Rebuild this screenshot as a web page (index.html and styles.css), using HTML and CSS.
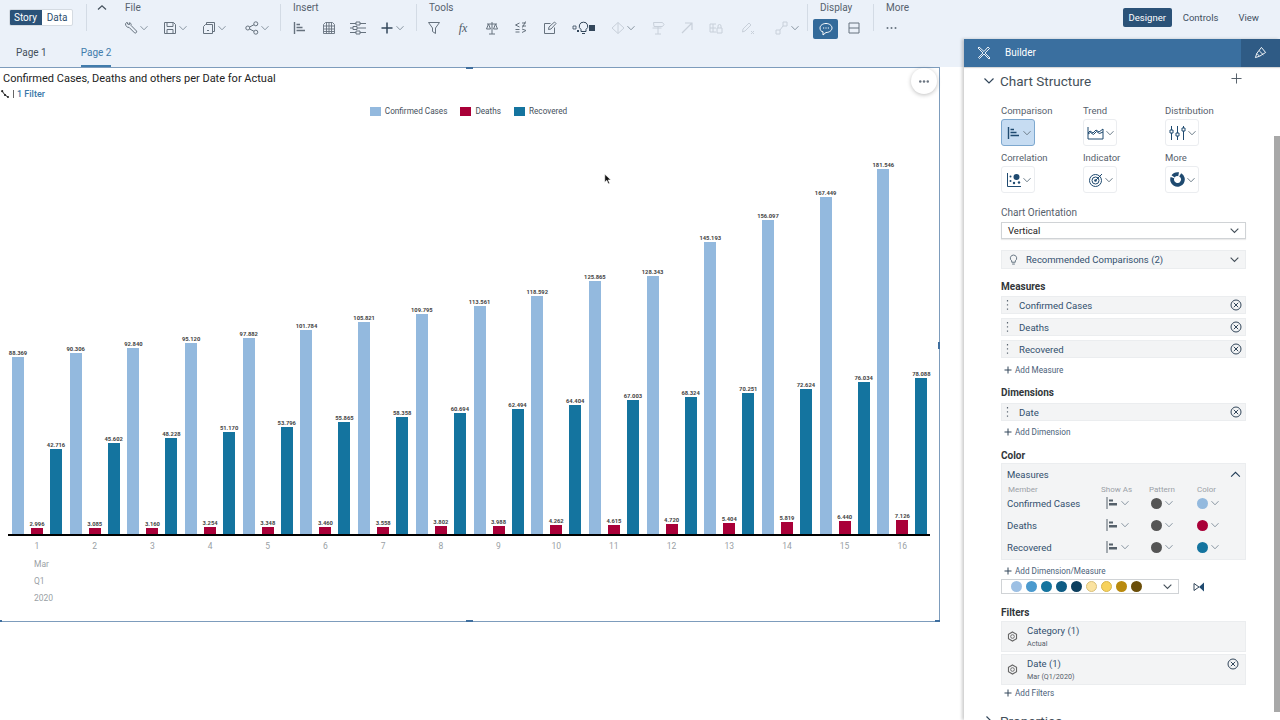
FILE: index.html
```html
<!DOCTYPE html>
<html lang="en">
<head>
<meta charset="utf-8">
<title>Story Designer</title>
<link rel="stylesheet" href="styles.css">
</head>
<body>
<svg class="defs" width="0" height="0">
  <symbol id="chev" viewBox="0 0 10 10"><path d="M1.5 3.2 5 6.8l3.5-3.6" fill="none" stroke="currentColor" stroke-width="1"/></symbol>
  <symbol id="xc" viewBox="0 0 12 12"><circle cx="6" cy="6" r="5" fill="none" stroke="currentColor"/><path d="M3.8 3.8l4.4 4.4M8.2 3.8 3.8 8.2" stroke="currentColor" fill="none"/></symbol>
  <symbol id="bars" viewBox="0 0 14 14"><path d="M1.5 1v12M3.5 3.5h3.5M3.5 6.5h6M3.5 9.5h8.5" stroke="currentColor" fill="none" stroke-width="1.4"/></symbol>
  <symbol id="grip" viewBox="0 0 3 12"><path d="M1.5 1v1.4M1.5 5.2v1.4M1.5 9.4v1.4" stroke="currentColor" stroke-width="1.2"/></symbol>
  <symbol id="hex" viewBox="0 0 12 12"><path d="M6 1 10.4 3.5v5L6 11 1.6 8.5v-5z" fill="none" stroke="currentColor" stroke-width="1.2"/><circle cx="6" cy="6" r="2" fill="none" stroke="currentColor"/></symbol>
  <symbol id="showas" viewBox="0 0 12 12"><path d="M1 0v12" stroke="currentColor"/><path d="M3 2.5h4v2H3zM3 6h8v2.500H3z" fill="currentColor"/></symbol>
</svg>

<header class="toolbar">
  <div class="switch"><span class="switch-on">Story</span><span class="switch-off">Data</span></div>
  <span class="sep sep-first"></span>
  <svg class="collapse" viewBox="0 0 10 10" width="10" height="10"><path d="M1 6.500 5 2.800l4 3.700" fill="none" stroke="currentColor" stroke-width="1.2"/></svg>

  <section class="group group-file">
    <h4>File</h4>
    <div class="tools">
      <span class="tool"><svg class="ico" viewBox="0 0 14 14"><path d="M1.500 2.800 3 1.200l.8 2 1.700.3L5.200 1.800C6.500 1.600 7.600 3 7 4.400l5.500 5.600c.8 1-.9 2.700-1.900 1.900L5 6.300C3.400 6.900 1.500 5 1.500 2.800z" fill="none" stroke="currentColor"/></svg><svg class="chev"><use href="#chev"/></svg></span>
      <span class="tool"><svg class="ico" viewBox="0 0 14 14"><path d="M1.500 1.500h9l2 2v9h-11zM4 1.500v4h6v-4M4 12.500v-4h6v4" fill="none" stroke="currentColor"/></svg><svg class="chev"><use href="#chev"/></svg></span>
      <span class="tool"><svg class="ico" viewBox="0 0 14 14"><path d="M4.500 3.500v-2h8v9h-2M1.500 5.500l2-2h7v9h-9z" fill="none" stroke="currentColor"/><path d="M5 9.500h2" stroke="currentColor"/></svg><svg class="chev"><use href="#chev"/></svg></span>
      <span class="tool tool-share"><svg class="ico" viewBox="0 0 14 14"><circle cx="2.800" cy="7" r="2" fill="none" stroke="currentColor"/><circle cx="10.800" cy="2.800" r="2" fill="none" stroke="currentColor"/><circle cx="10.800" cy="11.200" r="2" fill="none" stroke="currentColor"/><path d="M4.600 6 9 3.700M4.600 8 9 10.300" stroke="currentColor"/></svg><svg class="chev"><use href="#chev"/></svg></span>
    </div>
  </section>
  <span class="sep"></span>

  <section class="group group-insert">
    <h4>Insert</h4>
    <div class="tools">
      <span class="tool"><svg class="ico"><use href="#bars"/></svg></span>
      <span class="tool"><svg class="ico" viewBox="0 0 14 14"><path d="M3.500 1.500h7l2 2v9h-11v-9zM1.500 5h11M1.500 8h11M1.500 10.500h11M4.500 1.500v11M7 1.500v11M9.500 1.500v11" fill="none" stroke="currentColor" stroke-width=".9"/></svg></span>
      <span class="tool tool-wider"><svg class="ico ico-wide" viewBox="0 0 18 14"><path d="M1 2.500h6M11 2.500h6M1 7h3M8 7h9M1 11.500h6M11 11.500h6" stroke="currentColor" fill="none"/><path d="M7 1h4v3H7zM4 5.500h4v3H4zM7 10h4v3H7z" stroke="currentColor" fill="none"/></svg></span>
      <span class="tool"><svg class="ico" viewBox="0 0 14 14"><path d="M7 1.500v11M1.500 7h11" stroke="#33475b" stroke-width="1.500"/></svg><svg class="chev"><use href="#chev"/></svg></span>
    </div>
  </section>
  <span class="sep"></span>

  <section class="group group-tools">
    <h4>Tools</h4>
    <div class="tools">
      <span class="tool"><svg class="ico" viewBox="0 0 14 14"><path d="M1.500 1.500h11L8.500 7v5.500l-3-2V7z" fill="none" stroke="currentColor"/></svg></span>
      <span class="tool"><em class="fx">fx</em></span>
      <span class="tool"><svg class="ico" viewBox="0 0 14 14"><path d="M7 1v12M4 13h6M2 3h10M3.500 3 1.500 8h4zM10.500 3l-2 5h4z" fill="none" stroke="currentColor"/></svg></span>
      <span class="tool"><svg class="ico" viewBox="0 0 14 14"><path d="M5.500 2 1.500 4l4 2M1.500 8.500h4M1.500 11h4M8 2l4 0M8 5h4M11.500 .5 8.500 6.500M8 8l4 1.500L8 11.500" fill="none" stroke="currentColor"/></svg></span>
      <span class="tool"><svg class="ico" viewBox="0 0 14 14"><path d="M7.500 2.500h-6v10h10v-6M5.500 8.500l.5-2.500 5.500-5 1.500 1.500-5 5.500z" fill="none" stroke="currentColor"/></svg></span>
      <span class="tool tool-bulb"><svg class="ico-bulb" viewBox="0 0 24 14"><path d="M11.500 1.200a4 4 0 0 0-2.500 7.300v2h5v-2a4 4 0 0 0-2.500-7.300zM10 12.500h3" fill="none" stroke="currentColor"/><path d="M1 5h3v3H1z" fill="none" stroke="currentColor" stroke-width=".8"/><path d="M5 9h2v2H5z" fill="currentColor"/><path d="M17 4h6v6h-6z" fill="currentColor"/></svg></span>
      <span class="tool off"><svg class="ico" viewBox="0 0 14 14"><path d="M7 1.500 13 7l-6 5.500L1 7zM7 1.500v11" fill="none" stroke="currentColor"/></svg><svg class="chev"><use href="#chev"/></svg></span>
      <span class="tool off"><svg class="ico" viewBox="0 0 14 14"><path d="M7 5.500V13M4 13h6M2.500 1.500h9l1.500 2-1.500 2H3zM1.500 7h9" fill="none" stroke="currentColor"/></svg></span>
      <span class="tool off"><svg class="ico" viewBox="0 0 14 14"><path d="M2 12 12 2M5 2h7v7" fill="none" stroke="currentColor" stroke-width="1.200"/></svg></span>
      <span class="tool off"><svg class="ico" viewBox="0 0 14 14"><path d="M1 3h6M1 3v8h6M4 3v8M1 7h6M8 7h5v5H8zM9 7V5a1.500 1.500 0 0 1 3 0v2" fill="none" stroke="currentColor"/></svg></span>
      <span class="tool off tool-pen"><svg class="ico" viewBox="0 0 14 14"><path d="M1.500 11l.5-3L8 2l2 2-6 6zM10 10l3 3M13 10l-3 3" fill="none" stroke="currentColor"/></svg></span>
      <span class="tool off tool-nodes"><svg class="ico" viewBox="0 0 14 14"><path d="M1 9h4v4H1zM8 1h4v4H8zM5 9l3-4" fill="none" stroke="currentColor"/></svg><svg class="chev"><use href="#chev"/></svg></span>
    </div>
  </section>
  <span class="sep sep-tight"></span>

  <section class="group group-display">
    <h4>Display</h4>
    <div class="tools">
      <span class="tool tool-active"><svg class="ico" viewBox="0 0 14 14"><path d="M7 1.500c3.300 0 6 2 6 4.500s-2.700 4.500-6 4.500l-3 2.500v-3.200C2.300 9.800 1 8 1 6c0-2.500 2.700-4.500 6-4.500z" fill="none" stroke="currentColor"/><path d="M4 6h1.200M6.400 6h1.200M8.800 6H10" stroke="currentColor"/></svg></span>
      <span class="tool"><svg class="ico" viewBox="0 0 14 14"><path d="M2 2h10v10H2zM2 7h10" fill="none" stroke="currentColor"/></svg></span>
    </div>
  </section>
  <span class="sep sep-tight"></span>

  <section class="group group-more">
    <h4>More</h4>
    <div class="tools"><span class="tool"><svg class="ico" viewBox="0 0 14 14"><circle cx="2.500" cy="7" r="1" fill="currentColor"/><circle cx="6.500" cy="7" r="1" fill="currentColor"/><circle cx="10.500" cy="7" r="1" fill="currentColor"/></svg></span></div>
  </section>

  <nav class="modes"><span class="mode mode-on">Designer</span><span class="mode">Controls</span><span class="mode">View</span></nav>
</header>

<div class="workspace">
  <main class="story">
    <div class="tabs"><span class="tab">Page 1</span><span class="tab tab-on">Page 2</span></div>
    <div class="widget">
      <h1 class="chart-title">Confirmed Cases, Deaths and others per Date for Actual</h1>
      <div class="filterline">
        <svg viewBox="0 0 8 8" width="8" height="8"><path d="M1 1l3 4 3 2" fill="none" stroke="#222" stroke-width="1"/><circle cx="1.200" cy="1.200" r="1.100" fill="#222"/><circle cx="4" cy="5" r="1.100" fill="#222"/><circle cx="7" cy="7" r="1" fill="#222"/></svg>
        <span class="bar-sep"></span><span class="filter-link">1 Filter</span>
      </div>
      <ul class="legend">
        <li><i class="swatch cc"></i>Confirmed Cases</li>
        <li><i class="swatch de"></i>Deaths</li>
        <li><i class="swatch re"></i>Recovered</li>
      </ul>
      <div class="plot">
        <div class="day"><div class="col"><b>88.369</b><i class="cc" style="height:177px"></i></div><div class="col"><b>2.996</b><i class="de" style="height:6px"></i></div><div class="col"><b>42.716</b><i class="re" style="height:85px"></i></div></div>
        <div class="day"><div class="col"><b>90.306</b><i class="cc" style="height:181px"></i></div><div class="col"><b>3.085</b><i class="de" style="height:6px"></i></div><div class="col"><b>45.602</b><i class="re" style="height:91px"></i></div></div>
        <div class="day"><div class="col"><b>92.840</b><i class="cc" style="height:186px"></i></div><div class="col"><b>3.160</b><i class="de" style="height:6px"></i></div><div class="col"><b>48.228</b><i class="re" style="height:96px"></i></div></div>
        <div class="day"><div class="col"><b>95.120</b><i class="cc" style="height:191px"></i></div><div class="col"><b>3.254</b><i class="de" style="height:7px"></i></div><div class="col"><b>51.170</b><i class="re" style="height:102px"></i></div></div>
        <div class="day"><div class="col"><b>97.882</b><i class="cc" style="height:196px"></i></div><div class="col"><b>3.348</b><i class="de" style="height:7px"></i></div><div class="col"><b>53.796</b><i class="re" style="height:107px"></i></div></div>
        <div class="day"><div class="col"><b>101.784</b><i class="cc" style="height:204px"></i></div><div class="col"><b>3.460</b><i class="de" style="height:7px"></i></div><div class="col"><b>55.865</b><i class="re" style="height:112px"></i></div></div>
        <div class="day"><div class="col"><b>105.821</b><i class="cc" style="height:212px"></i></div><div class="col"><b>3.558</b><i class="de" style="height:7px"></i></div><div class="col"><b>58.358</b><i class="re" style="height:117px"></i></div></div>
        <div class="day"><div class="col"><b>109.795</b><i class="cc" style="height:220px"></i></div><div class="col"><b>3.802</b><i class="de" style="height:8px"></i></div><div class="col"><b>60.694</b><i class="re" style="height:121px"></i></div></div>
        <div class="day"><div class="col"><b>113.561</b><i class="cc" style="height:228px"></i></div><div class="col"><b>3.988</b><i class="de" style="height:8px"></i></div><div class="col"><b>62.494</b><i class="re" style="height:125px"></i></div></div>
        <div class="day"><div class="col"><b>118.592</b><i class="cc" style="height:238px"></i></div><div class="col"><b>4.262</b><i class="de" style="height:9px"></i></div><div class="col"><b>64.404</b><i class="re" style="height:129px"></i></div></div>
        <div class="day"><div class="col"><b>125.865</b><i class="cc" style="height:253px"></i></div><div class="col"><b>4.615</b><i class="de" style="height:9px"></i></div><div class="col"><b>67.003</b><i class="re" style="height:134px"></i></div></div>
        <div class="day"><div class="col"><b>128.343</b><i class="cc" style="height:258px"></i></div><div class="col"><b>4.720</b><i class="de" style="height:10px"></i></div><div class="col"><b>68.324</b><i class="re" style="height:137px"></i></div></div>
        <div class="day"><div class="col"><b>145.193</b><i class="cc" style="height:292px"></i></div><div class="col"><b>5.404</b><i class="de" style="height:11px"></i></div><div class="col"><b>70.251</b><i class="re" style="height:141px"></i></div></div>
        <div class="day"><div class="col"><b>156.097</b><i class="cc" style="height:314px"></i></div><div class="col"><b>5.819</b><i class="de" style="height:12px"></i></div><div class="col"><b>72.624</b><i class="re" style="height:145px"></i></div></div>
        <div class="day"><div class="col"><b>167.449</b><i class="cc" style="height:337px"></i></div><div class="col"><b>6.440</b><i class="de" style="height:13px"></i></div><div class="col"><b>76.034</b><i class="re" style="height:152px"></i></div></div>
        <div class="day"><div class="col"><b>181.546</b><i class="cc" style="height:365px"></i></div><div class="col"><b>7.126</b><i class="de" style="height:14px"></i></div><div class="col"><b>78.088</b><i class="re" style="height:156px"></i></div></div>
      </div>
      <div class="ticks">
        <span>1</span><span>2</span><span>3</span><span>4</span><span>5</span><span>6</span><span>7</span><span>8</span><span>9</span><span>10</span><span>11</span><span>12</span><span>13</span><span>14</span><span>15</span><span>16</span>
      </div>
      <div class="levels"><span>Mar</span><span>Q1</span><span>2020</span></div>

      <button class="more-btn" aria-label="More"><svg viewBox="0 0 14 6" width="12" height="5"><circle cx="2.500" cy="3" r="1.500" fill="#6a7480"/><circle cx="7" cy="3" r="1.500" fill="#6a7480"/><circle cx="11.500" cy="3" r="1.500" fill="#6a7480"/></svg></button>
      <i class="handle h-top"></i><i class="handle h-right"></i><i class="handle h-bottom"></i><i class="handle h-left"></i><i class="handle h-corner"></i>
    </div>
    <svg class="cursor" viewBox="0 0 10 14" width="8" height="12"><path d="M1 1v10l2.500-2.300L5.300 13l1.700-.8-1.800-4.100H8.500z" fill="#111" stroke="#fff" stroke-width=".7"/></svg>
  </main>

  <aside class="panel">
    <div class="panel-head">
      <svg class="head-ico" viewBox="0 0 14 14" width="14" height="14"><path d="M2 1 1 2l5 5-4.500 4.500 1 1L7 8l5 5 1-1-5-5 4.500-4.500-1.500-1.500L7 5.500z" fill="none" stroke="#fff" stroke-width=".9"/></svg>
      <span class="head-title">Builder</span>
      <span class="head-alt"><svg viewBox="0 0 14 14" width="13" height="13"><path d="M8 1.500 12.500 7 6 11 3 8zM3 8l-1.500 4.500L6 11M5.500 5l4.500 4.500" fill="none" stroke="#fff" stroke-width="1"/></svg></span>
    </div>
    <div class="panel-body">
      <div class="section-head">
        <svg class="sec-chev" viewBox="0 0 12 12" width="12" height="12"><path d="M1.500 3.500 6 8l4.500-4.500" fill="none" stroke="#32465a" stroke-width="1.200"/></svg>
        <h2>Chart Structure</h2>
        <svg class="sec-plus" viewBox="0 0 12 12" width="11" height="11"><path d="M6 .5v11M.5 6h11" stroke="#4a5560" stroke-width="1"/></svg>
      </div>
      <div class="type-grid">
        <div class="type"><label>Comparison</label><span class="type-btn type-on"><svg class="tico"><use href="#bars"/></svg><svg class="chev"><use href="#chev"/></svg></span></div>
        <div class="type"><label>Trend</label><span class="type-btn"><svg class="tico tico-w" viewBox="0 0 17 14"><path d="M1 1v12h15V3l-4 3-3-2-3 3-3-2-2 2M1 8l2.500-1.500 3 2 3-3 3 2L16 6" fill="none" stroke="currentColor"/></svg><svg class="chev"><use href="#chev"/></svg></span></div>
        <div class="type"><label>Distribution</label><span class="type-btn"><svg class="tico tico-w" viewBox="0 0 17 14"><path d="M2.500 0v14M8.500 0v14M14.500 0v14" stroke="currentColor" fill="none"/><path d="M1 4h3v3H1zM7 7h3v3H7zM13 2h3v3h-3z" fill="#fff" stroke="currentColor"/></svg><svg class="chev"><use href="#chev"/></svg></span></div>
        <div class="type"><label>Correlation</label><span class="type-btn"><svg class="tico" viewBox="0 0 14 14"><path d="M.5 0v13.500H14" stroke="currentColor" fill="none"/><circle cx="9.500" cy="4" r="3" fill="currentColor"/><circle cx="3.500" cy="3.500" r="1" fill="currentColor"/><circle cx="3.500" cy="8" r="1" fill="currentColor"/><circle cx="7" cy="10" r="1.200" fill="currentColor"/><circle cx="12" cy="9.500" r="1.200" fill="currentColor"/></svg><svg class="chev"><use href="#chev"/></svg></span></div>
        <div class="type"><label>Indicator</label><span class="type-btn"><svg class="tico" viewBox="0 0 14 14"><circle cx="6.500" cy="7.500" r="6" fill="none" stroke="currentColor"/><circle cx="6.500" cy="7.500" r="3.500" fill="none" stroke="currentColor"/><circle cx="6.500" cy="7.500" r="1.300" fill="currentColor"/><path d="M6.500 7.500 13 1" stroke="currentColor"/></svg><svg class="chev"><use href="#chev"/></svg></span></div>
        <div class="type"><label>More</label><span class="type-btn"><svg class="tico tico-donut" viewBox="0 0 14 14"><circle cx="7" cy="7" r="5" fill="none" stroke="#1f4a70" stroke-width="3.600" stroke-dasharray="22 1.400 5.600 2.400" transform="rotate(-60 7 7)"/></svg><svg class="chev"><use href="#chev"/></svg></span></div>
      </div>

      <label class="field-label">Chart Orientation</label>
      <div class="select"><span>Vertical</span><svg class="chev-lg"><use href="#chev"/></svg></div>
      <div class="recommend">
        <svg viewBox="0 0 10 13" width="9" height="12"><path d="M5 1a3.500 3.500 0 0 0-2 6.400V9h4V7.400A3.500 3.500 0 0 0 5 1zM3.500 11h3" fill="none" stroke="#5a6a78"/></svg>
        <span>Recommended Comparisons (2)</span><svg class="chev-lg"><use href="#chev"/></svg>
      </div>

      <h3 class="sub sub-measures">Measures</h3>
      <div class="items">
        <div class="item"><svg class="grip"><use href="#grip"/></svg><span>Confirmed Cases</span><svg class="xc"><use href="#xc"/></svg></div>
        <div class="item"><svg class="grip"><use href="#grip"/></svg><span>Deaths</span><svg class="xc"><use href="#xc"/></svg></div>
        <div class="item"><svg class="grip"><use href="#grip"/></svg><span>Recovered</span><svg class="xc"><use href="#xc"/></svg></div>
      </div>
      <div class="add"><svg viewBox="0 0 8 8" width="8" height="8"><path d="M4 .5v7M.5 4h7" stroke="#32465a"/></svg>Add Measure</div>

      <h3 class="sub">Dimensions</h3>
      <div class="items">
        <div class="item"><svg class="grip"><use href="#grip"/></svg><span>Date</span><svg class="xc"><use href="#xc"/></svg></div>
      </div>
      <div class="add"><svg viewBox="0 0 8 8" width="8" height="8"><path d="M4 .5v7M.5 4h7" stroke="#32465a"/></svg>Add Dimension</div>

      <h3 class="sub sub-color">Color</h3>
      <div class="color-box">
        <div class="color-head"><span>Measures</span><svg viewBox="0 0 12 8" width="11" height="7"><path d="M1 6.500 6 1.500l5 5" fill="none" stroke="#1f3a55" stroke-width="1.200"/></svg></div>
        <div class="color-row color-cols"><span>Member</span><span>Show As</span><span>Pattern</span><span>Color</span></div>
        <div class="color-row"><span class="mem">Confirmed Cases</span><span class="cell cell-show"><svg class="sa"><use href="#showas"/></svg><svg class="chev"><use href="#chev"/></svg></span><span class="cell cell-pat"><i class="dot pat"></i><svg class="chev"><use href="#chev"/></svg></span><span class="cell"><i class="dot d-cc"></i><svg class="chev"><use href="#chev"/></svg></span></div>
        <div class="color-row"><span class="mem">Deaths</span><span class="cell cell-show"><svg class="sa"><use href="#showas"/></svg><svg class="chev"><use href="#chev"/></svg></span><span class="cell cell-pat"><i class="dot pat"></i><svg class="chev"><use href="#chev"/></svg></span><span class="cell"><i class="dot d-de"></i><svg class="chev"><use href="#chev"/></svg></span></div>
        <div class="color-row"><span class="mem">Recovered</span><span class="cell cell-show"><svg class="sa"><use href="#showas"/></svg><svg class="chev"><use href="#chev"/></svg></span><span class="cell cell-pat"><i class="dot pat"></i><svg class="chev"><use href="#chev"/></svg></span><span class="cell"><i class="dot d-re"></i><svg class="chev"><use href="#chev"/></svg></span></div>
      </div>
      <div class="add add-color"><svg viewBox="0 0 8 8" width="8" height="8"><path d="M4 .5v7M.5 4h7" stroke="#32465a"/></svg>Add Dimension/Measure</div>
      <div class="palette-row">
        <div class="palette">
          <i class="p1"></i><i class="p2"></i><i class="p3"></i><i class="p4"></i><i class="p5"></i><i class="p6"></i><i class="p7"></i><i class="p8"></i><i class="p9"></i>
          <svg class="chev-lg"><use href="#chev"/></svg>
        </div>
        <svg class="swap" viewBox="0 0 12 10" width="12" height="10"><path d="M1 1.500 6 5 1 8.500z" fill="none" stroke="#32465a"/><path d="M11 .5v9L6 5z" fill="#1f4a70"/></svg>
      </div>

      <h3 class="sub sub-filters">Filters</h3>
      <div class="filter">
        <svg class="fico"><use href="#hex"/></svg>
        <div class="filter-text"><span class="f-name">Category (1)</span><span class="f-val">Actual</span></div>
      </div>
      <div class="filter">
        <svg class="fico"><use href="#hex"/></svg>
        <div class="filter-text"><span class="f-name">Date (1)</span><span class="f-val">Mar (Q1/2020)</span></div>
        <svg class="xc xc-top"><use href="#xc"/></svg>
      </div>
      <div class="add add-filters"><svg viewBox="0 0 8 8" width="8" height="8"><path d="M4 .5v7M.5 4h7" stroke="#32465a"/></svg>Add Filters</div>
      <div class="section-head section-props">
        <svg class="sec-chev" viewBox="0 0 12 12" width="12" height="12"><path d="M3.500 1.500 8 6l-4.500 4.500" fill="none" stroke="#32465a" stroke-width="1.200"/></svg>
        <h2>Properties</h2>
      </div>
    </div>
    <i class="scrollbar"></i>
  </aside>
</div>
</body>
</html>
```
FILE: styles.css
```css
* { box-sizing: border-box; }
html, body { margin: 0; height: 720px; overflow: hidden; }
body { font-family: Roboto, "Open Sans", "Liberation Sans", sans-serif; background: #fff; color: #32363a; font-size: 11px; }
.defs { position: absolute; }
h1, h2, h3, h4 { margin: 0; font-weight: 400; }

/* toolbar */
.toolbar { height: 39px; background: #ebf1f9; display: flex; align-items: flex-start; color: #5a6672; }
.switch { margin: 9px 0 0 9px; width: 64px; height: 17px; display: flex; border-radius: 2px; overflow: hidden; border: 1px solid #d5dbe2; background: #fff; font-size: 10px; }
.switch-on { width: 33px; margin: -1px 0 -1px -1px; background: #2b5278; color: #fff; text-align: center; line-height: 17px; }
.switch-off { flex: 1; text-align: center; line-height: 15px; color: #2f4f6f; }
.sep { width: 1px; height: 27px; margin-top: 4px; background: #d3dbe5; flex: none; }
.sep-first { margin-left: 13px; }
.collapse { margin: 3px 0 0 10px; color: #44505c; flex: none; }
.group { padding-top: 2px; flex: none; }
.group h4 { font-size: 10px; line-height: 12px; color: #56626e; }
.tools { display: flex; gap: 15px; margin-top: 5px; height: 18px; align-items: center; }
.tool { display: inline-flex; align-items: center; gap: 1px; color: #66727e; height: 18px; }
.tool.off { color: #c8d0da; }
.ico { width: 14px; height: 14px; flex: none; }
.ico-wide { width: 18px; }
.ico-bulb { width: 24px; height: 14px; color: #33475b; }
.tool-wider { margin: 0 -2px; }
.tool-share { margin-left: 4px; }
.tool-pen { margin-left: 3px; }
.tool-nodes { margin-left: 5px; }
.chev { width: 10px; height: 10px; flex: none; color: #8a97a3; }
.fx { font-family: "Liberation Serif", serif; font-size: 12px; width: 14px; text-align: center; color: #4d5a68; }
.group-file { margin-left: 18px; width: 155px; }
.group-file .tools { gap: 14px; margin-left: -1px; }
.group-insert { margin-left: 12px; width: 123px; }
.group-tools { margin-left: 12px; width: 378px; }
.group-tools .tools { margin-left: -2px; }
.group-display { margin-left: 6px; width: 59px; }
.group-display h4 { padding-left: 6px; }
.group-display .tools { gap: 9px; margin-left: -1px; }
.tool-active { width: 25px; height: 20px; background: #336a9a; color: #fff; justify-content: center; border-radius: 2px; margin-top: 1px; }
.group-more { margin-left: 12px; }
.group-more .tools { margin-left: -1px; }
.modes { margin-left: auto; margin-top: 8px; margin-right: 21px; display: flex; align-items: center; gap: 11px; }
.mode { font-size: 9.500px; line-height: 19px; color: #3f5061; }
.mode:nth-child(3) { margin-left: 9px; }
.mode-on { width: 49px; text-align: center; background: #2b5278; color: #fff; border-radius: 2px; }

/* workspace */
.workspace { display: flex; height: 681px; }
.story { width: 964px; flex: none; position: relative; }
.tabs { height: 28px; background: #ebf1f9; display: flex; gap: 34px; padding-left: 16px; }
.tab { font-size: 10px; line-height: 27px; color: #44505c; height: 28px; }
.tab-on { color: #427cac; border-bottom: 2px solid #427cac; }

/* widget */
.widget { position: relative; width: 940px; height: 555px; border: 1px solid #7d9cbc; border-left: 0; }
.chart-title { font-size: 11px; line-height: 14px; padding: 4px 0 0 3px; color: #222; }
.filterline { display: flex; align-items: center; height: 12px; margin-top: 2px; padding-left: 1px; }
.bar-sep { width: 1px; height: 8px; background: #666; margin: 0 3px 0 4px; }
.filter-link { font-size: 9px; color: #3a78a8; font-weight: 500; }
.legend { list-style: none; margin: 5px 0 0; padding: 0 2px 0 0; display: flex; justify-content: center; gap: 13px; height: 12px; align-items: center; font-size: 8.200px; color: #45505c; }
.legend li { display: flex; align-items: center; gap: 4px; }
.swatch { width: 11px; height: 9px; display: block; }
.cc { background: #93b9de; }
.de { background: #a90038; }
.re { background: #14749f; }
.plot { display: flex; gap: 7.7px; margin: 0 9px 0 8px; padding: 0 4px; height: 419px; border-bottom: 2px solid #000; align-items: flex-end; }
.day { display: flex; gap: 7px; width: 50px; flex: none; height: 100%; align-items: flex-end; }
.col { width: 12px; flex: none; display: flex; flex-direction: column; align-items: center; }
.col b { font-size: 5.800px; line-height: 8px; color: #444; white-space: nowrap; font-weight: 700; }
.col i { display: block; width: 12px; }
.ticks { display: flex; gap: 7.7px; padding-left: 12px; margin-top: 5px; }
.ticks span { width: 50px; flex: none; text-align: center; font-size: 8.500px; line-height: 10px; color: #9a9fa5; }
.levels { display: flex; flex-direction: column; gap: 7px; padding: 8px 0 0 34px; font-size: 8.500px; color: #9a9fa5; line-height: 10px; }
.more-btn { position: absolute; right: 2px; top: 0; width: 26px; height: 26px; border-radius: 50%; background: #fff; border: 0; box-shadow: 0 1px 4px rgba(0,0,0,.25); padding: 0; display: flex; align-items: center; justify-content: center; }
.handle { position: absolute; background: #3f6f9f; display: block; }
.h-top { left: 466px; top: -1px; width: 7px; height: 2px; }
.h-bottom { left: 466px; bottom: -1px; width: 7px; height: 2px; }
.h-left { left: 0; bottom: -1px; width: 2px; height: 2px; }
.h-right { right: -1px; top: 274px; width: 2px; height: 7px; }
.h-corner { right: -1px; bottom: -1px; width: 5px; height: 2px; box-shadow: 3px -3px 0 -1px #3f6f9f; }
.cursor { position: absolute; left: 604px; top: 134px; }

/* panel */
.panel { width: 316px; flex: none; position: relative; height: 681px; box-shadow: -2px 0 3px rgba(0,0,0,.2); background: #fff; overflow: hidden; }
.panel-head { height: 28px; background: #3a6f9f; color: #fff; display: flex; align-items: center; padding: 0 0 1px 13px; box-shadow: 0 1px 1px rgba(0,0,0,.15); }
.head-title { margin-left: 14px; font-size: 10px; }
.head-alt { margin-left: auto; width: 39px; height: 28px; background: #2f5b85; display: flex; align-items: center; justify-content: center; }
.panel-body { padding: 0 34px 0 37px; }
.scrollbar { position: absolute; right: 0; top: 97px; width: 6px; height: 576px; background: #a8a8a8; display: block; }
.section-head { display: flex; align-items: center; height: 28px; color: #32363a; margin-left: -18px; }
.section-head h2 { font-size: 13.500px; color: #45505a; margin-left: 5px; }
.sec-plus { margin-left: auto; margin-top: -6px; margin-right: 4px; }
.sec-chev { flex: none; }
.section-props { margin-top: 13px; height: 20px; }
.type-grid { display: grid; grid-template-columns: repeat(3, 82px); row-gap: 6px; margin-top: 10px; }
.type label { display: block; font-size: 9.500px; line-height: 12px; color: #56616c; }
.type-btn { margin-top: 2px; width: 34px; height: 27px; display: flex; align-items: center; justify-content: center; gap: 1px; border: 1px solid #ebedf0; border-radius: 3px; color: #1f4a70; background: #fff; }
.type-on { background: #c6dcf2; border-color: #7da8cf; }
.tico { width: 14px; height: 14px; flex: none; }
.tico-w { width: 17px; }
.tico-donut { width: 15px; height: 15px; }
.type-btn .chev { margin-right: -2px; color: #6f7f8c; }
.field-label { display: block; font-size: 10px; line-height: 12px; color: #56616c; margin-top: 14px; }
.select { margin-top: 3px; height: 17px; border: 1px solid #d0d3d6; box-shadow: 0 1px 1px rgba(0,0,0,.08); display: flex; align-items: center; justify-content: space-between; padding: 0 5px 0 6px; font-size: 9.500px; color: #222; }
.chev-lg { width: 11px; height: 11px; color: #45505a; flex: none; }
.recommend { margin-top: 11px; height: 19px; background: #f4f5f6; border: 1px solid #ebedef; display: flex; align-items: center; padding: 0 5px 0 7px; font-size: 9.500px; color: #32506e; }
.recommend span { margin-left: 8px; flex: 1; }
.sub { font-size: 10px; line-height: 12px; font-weight: 700; color: #32363a; margin-top: 12px; }
.sub-measures { margin-top: 12px; }
.sub-color { margin-top: 13px; }
.items { margin-top: 4px; display: flex; flex-direction: column; gap: 4px; }
.sub-measures + .items { margin-top: 3px; }
.item { height: 18px; background: #f3f4f5; border: 1px solid #ebedef; display: flex; align-items: center; padding: 0 3px 0 4px; font-size: 9.600px; color: #32506e; }
.grip { width: 3px; height: 12px; color: #5a6470; flex: none; }
.item span { margin-left: 10px; flex: 1; }
.xc { width: 12px; height: 12px; color: #32465a; flex: none; }
.add { display: flex; align-items: center; gap: 3px; margin-top: 6px; padding-left: 3px; font-size: 8.200px; line-height: 10px; color: #4a6078; }
.sub-measures + .items + .add { margin-top: 7px; }
.color-box { margin-top: 1px; height: 97px; background: #f3f4f5; border: 1px solid #ebedef; padding: 0 4px 0 5px; }
.color-head { display: flex; justify-content: space-between; align-items: center; height: 20px; font-size: 9.500px; color: #32506e; }
.color-row { display: grid; grid-template-columns: 94px 48px 48px 1fr; height: 22px; align-items: center; font-size: 9.600px; color: #32506e; }
.color-cols { height: 10px; font-size: 8px; color: #9ba1a7; margin-bottom: -2px; }
.color-cols span:first-child { padding-left: 1px; }
.color-row .cell { display: flex; align-items: center; gap: 2px; }
.cell-show { padding-left: 5px; }
.cell-pat { padding-left: 2px; }
.sa { width: 12px; height: 12px; color: #55606a; flex: none; }
.dot { width: 11px; height: 11px; border-radius: 50%; display: block; flex: none; }
.pat { background: #555; }
.d-cc { background: #93b9de; }
.d-de { background: #a90038; }
.d-re { background: #14749f; }
.add-color { margin-top: 6px; }
.palette-row { display: flex; align-items: center; gap: 14px; margin-top: 3px; }
.palette { width: 178px; height: 15px; border: 1px solid #d0d3d6; display: flex; align-items: center; gap: 4px; padding: 0 5px 0 9px; }
.palette i { width: 11px; height: 11px; border-radius: 50%; display: block; flex: none; }
.palette .chev-lg { margin-left: auto; }
.p1 { background: #9dc0e4; }
.p2 { background: #4b9ace; }
.p3 { background: #14749f; }
.p4 { background: #0e5c84; }
.p5 { background: #0b3e5e; }
.p6 { background: #fbe3a0; border: 1px solid #d9c07a; }
.p7 { background: #f7d25c; border: 1px solid #d9b64c; }
.p8 { background: #b98a0e; }
.p9 { background: #6b4e09; }
.swap { flex: none; }
.sub-filters { margin-top: 13px; }
.filter { height: 31px; margin-top: 2px; background: #f3f4f5; border: 1px solid #ebedef; display: flex; align-items: center; padding: 0 6px 0 5px; position: relative; }
.sub-filters + .filter { margin-top: 2px; }
.fico { width: 11px; height: 11px; color: #666; flex: none; }
.filter-text { display: flex; flex-direction: column; margin-left: 9px; flex: 1; }
.f-name { font-size: 9.500px; line-height: 13px; color: #32506e; }
.f-val { font-size: 7.200px; line-height: 13px; color: #55606a; }
.xc-top { align-self: flex-start; margin-top: 3px; }
.add-filters { margin-top: 3px; }
```
